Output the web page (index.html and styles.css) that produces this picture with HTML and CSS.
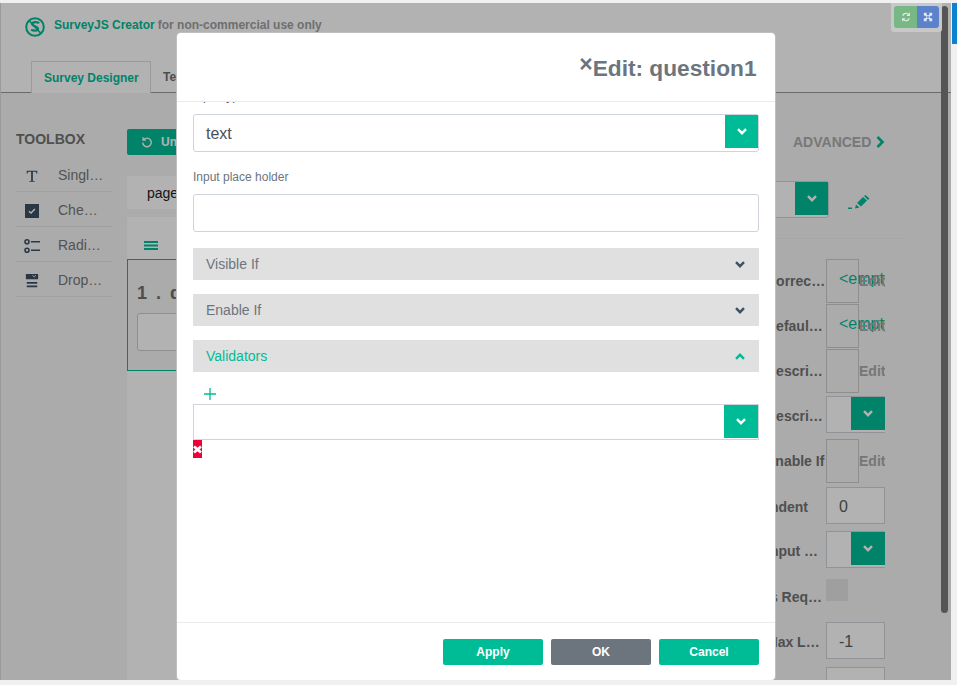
FILE: index.html
```html
<!DOCTYPE html>
<html lang="en">
<head>
    <meta charset="UTF-8">
    <meta name="viewport" content="width=device-width, initial-scale=1.0">
    <title>SurveyJS Creator</title>
    <link rel="stylesheet" href="styles.css">
</head>
<body>
    <div class="top-strip"></div>
    <div class="window">
        <div class="frame">
            <!-- Page behind the dialog -->
            <div class="app">
                <header class="brand">
                    <svg class="brand-logo" viewBox="0 0 20 20" fill="none" stroke="#00bc96">
                        <circle cx="10" cy="10" r="8.800" stroke-width="2"/>
                        <path d="M14 6.400c-1-1.800-6.600-1.800-6.800.6-.2 2.400 6 2 5.800 5-.2 2.200-5.200 2-6.800.6" stroke-width="2.200"/>
                        <path d="M4.500 4l11 12" stroke-width="1.800"/>
                    </svg>
                    <span class="brand-name">SurveyJS Creator</span>
                    <span class="brand-note">for non-commercial use only</span>
                </header>
                <nav class="tabs">
                    <a class="tab tab-active">Survey Designer</a>
                    <a class="tab">Test Survey</a>
                </nav>
                <main class="workspace">
                    <aside class="toolbox">
                        <h4 class="toolbox-title">TOOLBOX</h4>
                        <div class="tool">
                            <svg class="tool-icon" viewBox="0 0 16 16"><path d="M2 2h12v3.500h-.8C13 3.500 12.500 3 11 3H9v10c0 .5.500.8 2 .8v.7H5v-.7c1.500 0 2-.3 2-.8V3H5C3.500 3 3 3.500 2.800 5.500H2z"/></svg>
                            <span class="tool-name">Single Input</span>
                        </div>
                        <div class="tool">
                            <svg class="tool-icon" viewBox="0 0 16 16"><path d="M0 0h16v16H0z"/><path d="M4.500 8.200l2.400 2.200 4.400-4.600" fill="none" stroke="#fff" stroke-width="1.600"/></svg>
                            <span class="tool-name">Checkbox</span>
                        </div>
                        <div class="tool">
                            <svg class="tool-icon tool-icon-wide" viewBox="0 0 16 14"><circle cx="3" cy="2.800" r="2" fill="none" stroke="#3d5165" stroke-width="1.600"/><circle cx="3" cy="11.200" r="2" fill="none" stroke="#3d5165" stroke-width="1.600"/><path d="M7 2h9v1.600H7zM7 10.400h9V12H7z"/></svg>
                            <span class="tool-name">Radiogroup</span>
                        </div>
                        <div class="tool">
                            <svg class="tool-icon" viewBox="0 1 16 16"><path d="M1 1h14v6H1z"/><path d="M2 10h12v2H2zM2 14h12v2H2z"/><path d="M8.500 2.500l2 1.800 2-1.800" fill="none" stroke="#fff"/></svg>
                            <span class="tool-name">Dropdown</span>
                        </div>
                    </aside>

                    <section class="designer">
                        <div class="toolbar">
                            <button class="undo-btn">
                                <svg viewBox="0 0 14 14" fill="none" stroke="#fff" stroke-width="1.600"><path d="M3.200 4.200A5 5 0 1 1 2 7.500"/><path d="M2.400 1.400v3.200h3.200"/></svg>
                                Undo
                            </button>
                        </div>
                        <div class="page-bar">page1</div>
                        <div class="surface">
                            <svg class="hamburger" viewBox="0 0 14 9" fill="#00bc96"><path d="M0 0h14v2H0zM0 3.500h14v2H0zM0 7h14v2H0z"/></svg>
                            <div class="question">
                                <div class="question-title">1 . question1</div>
                                <div class="question-input"></div>
                            </div>
                        </div>
                    </section>

                    <aside class="props">
                        <div class="props-head">ADVANCED
                            <svg viewBox="0 0 9 12" fill="none" stroke="#00bc96" stroke-width="2.600"><path d="M1.500 1l5 5-5 5"/></svg>
                        </div>
                        <div class="props-tools">
                            <div class="select select-props">
                                <span class="select-btn"><svg class="chev" viewBox="0 0 10 7"><path d="M1 1.200l4 4 4-4"/></svg></span>
                            </div>
                            <svg class="pencil" viewBox="0 0 22 15" fill="#00bc96"><path d="M0 12.500h4v1.500H0zM7 13.500l1-4 3.500 3zM9 8l6-6 4 3.500-6 6zM16 1l1.500-1 4 3.500L20 5z"/></svg>
                        </div>
                        <div class="prop-list">
                            <div class="prop-label">Correct Answer</div>
                            <div class="prop-value"><div class="edit-box"><span class="empty">&lt;empty&gt;</span></div><span class="edit-link">Edit</span></div>
                            <div class="prop-label">Default Value</div>
                            <div class="prop-value"><div class="edit-box"><span class="empty">&lt;empty&gt;</span></div><span class="edit-link">Edit</span></div>
                            <div class="prop-label">Description</div>
                            <div class="prop-value"><div class="edit-box"></div><span class="edit-link">Edit</span></div>
                            <div class="prop-label prop-label-tight">Description Location</div>
                            <div class="prop-value"><div class="select select-small"><span class="select-btn"><svg class="chev" viewBox="0 0 10 7"><path d="M1 1.200l4 4 4-4"/></svg></span></div></div>
                            <div class="prop-label">Enable If</div>
                            <div class="prop-value"><div class="edit-box"></div><span class="edit-link">Edit</span></div>
                            <div class="prop-label prop-label-tight">Indent</div>
                            <div class="prop-value"><div class="num-box">0</div></div>
                            <div class="prop-label prop-label-tight">Input Type</div>
                            <div class="prop-value"><div class="select select-small"><span class="select-btn"><svg class="chev" viewBox="0 0 10 7"><path d="M1 1.200l4 4 4-4"/></svg></span></div></div>
                            <div class="prop-label prop-label-check">Is Required</div>
                            <div class="prop-value"><div class="check-box"></div></div>
                            <div class="prop-label prop-label-tight">Max Length</div>
                            <div class="prop-value"><div class="num-box">-1</div></div>
                            <div class="prop-label prop-label-tight">Min Width</div>
                            <div class="prop-value"><div class="num-box"></div></div>
                        </div>
                    </aside>
                </main>
            </div>

            <div class="backdrop"></div>

            <!-- Edit dialog -->
            <div class="modal">
                <div class="modal-header">
                    <span class="modal-close">×</span>
                    <h5 class="modal-title">Edit: question1</h5>
                </div>
                <div class="modal-body">
                    <label class="field-label field-label-scrolled">Input type</label>
                    <div class="select select-large">
                        <span class="select-text">text</span>
                        <span class="select-btn"><svg class="chev" viewBox="0 0 10 7"><path d="M1 1.200l4 4 4-4"/></svg></span>
                    </div>
                    <label class="field-label">Input place holder</label>
                    <div class="text-input"></div>
                    <div class="section-bar">Visible If <svg class="chev chev-dark" viewBox="0 0 10 7"><path d="M1 1.200l4 4 4-4"/></svg></div>
                    <div class="section-bar">Enable If <svg class="chev chev-dark" viewBox="0 0 10 7"><path d="M1 1.200l4 4 4-4"/></svg></div>
                    <div class="section-bar section-open">Validators <svg class="chev chev-teal" viewBox="0 0 10 7"><path d="M1 5.800l4-4 4 4"/></svg></div>
                    <svg class="add-icon" viewBox="0 0 12 12" stroke="#00bc96" stroke-width="1.300"><path d="M6 0v12M0 6h12"/></svg>
                    <div class="select select-validator">
                        <span class="select-btn"><svg class="chev" viewBox="0 0 10 7"><path d="M1 1.200l4 4 4-4"/></svg></span>
                    </div>
                    <button class="remove-btn">
                        <svg viewBox="0 0 9 9" stroke="#fff" stroke-width="2.800"><path d="M1 1.500l7 6M8 1.500l-7 6"/></svg>
                    </button>
                </div>
                <div class="modal-footer">
                    <button class="btn btn-teal">Apply</button>
                    <button class="btn btn-gray">OK</button>
                    <button class="btn btn-teal">Cancel</button>
                </div>
            </div>

            <div class="scrollbar"></div>

            <!-- Floating buttons -->
            <div class="float-box">
                <span class="float-btn float-green">
                    <svg viewBox="0 0 12 12" fill="none" stroke="#e4efe6" stroke-width="1.300"><path d="M2 4.500A4.200 4.200 0 0 1 9.500 3.500M10 7.500A4.200 4.200 0 0 1 2.500 8.500"/><path d="M10 1v3H7M2 11V8h3"/></svg>
                </span>
                <span class="float-btn float-blue">
                    <svg viewBox="0 0 12 12" fill="#e4e9f5"><path d="M1 1h4L3.800 2.200 6 4.400 4.400 6 2.200 3.800 1 5zM11 1v4L9.800 3.800 7.600 6 6 4.400 8.200 2.200 7 1zM1 11V7l1.200 1.200L4.400 6 6 7.600 3.800 9.800 5 11zM11 11H7l1.200-1.200L6 7.600 7.600 6l2.200 2.200L11 7z"/></svg>
                </span>
            </div>
            <div class="edge-notch"></div>
        </div>
        <div class="side-rail"><div class="side-blue"></div></div>
    </div>
    <div class="bottom-strip"></div>
</body>
</html>
```

FILE: styles.css
```css
/* Global styles */
* {
    box-sizing: border-box;
}

html, body {
    height: 100%;
}

body {
    font-family: "Liberation Sans", Arial, sans-serif;
    margin: 0;
    display: flex;
    flex-direction: column;
    width: 957px;
    height: 685px;
    overflow: hidden;
    background-color: #f0f0f0;
}

button {
    font-family: inherit;
    border: none;
    padding: 0;
}

.top-strip {
    height: 3px;
}

.bottom-strip {
    height: 5px;
}

.window {
    display: flex;
    height: 677px;
}

.frame {
    position: relative;
    width: 951px;
    border-left: 1px solid #9a9a9a;
    overflow: hidden;
}

.side-rail {
    width: 6px;
    padding-left: 1px;
}

.side-blue {
    height: 41px;
    background-color: #0a82cf;
}

/* App behind the dialog */
.app {
    height: 100%;
    display: flex;
    flex-direction: column;
    background-color: #fff;
}

.brand {
    display: flex;
    align-items: center;
    height: 58px;
    padding: 0 0 11px 24px;
    font-size: 12px;
    font-weight: bold;
}

.brand-logo {
    width: 20px;
    height: 20px;
    margin-right: 9px;
}

.brand-name {
    color: #00bc96;
    margin: 0 3px 3px 0;
}

.brand-note {
    color: #a0a0a0;
    margin-bottom: 3px;
}

.tabs {
    display: flex;
    height: 32px;
    padding-left: 30px;
    border-bottom: 1px solid #999;
    font-size: 12px;
    font-weight: bold;
    white-space: nowrap;
}

.tab {
    padding: 9px 12px;
    height: 32px;
    color: #6f6f6f;
}

.tab-active {
    width: 120px;
    color: #00bc96;
    background-color: #fff;
    border: 1px solid #ddd;
    border-bottom: none;
}

.workspace {
    flex: 1;
    display: flex;
    min-height: 0;
    background-color: #f5f5f5;
}

.toolbox {
    width: 126px;
    padding-left: 15px;
}

.toolbox-title {
    margin: 37px 0 9px;
    font-size: 14px;
    line-height: 18px;
    color: #727272;
}

.tool {
    display: flex;
    align-items: flex-start;
    width: 96px;
    height: 35px;
    padding: 9px 0 0 9px;
    border-bottom: 1px solid #e6e6e6;
}

.tool-icon {
    flex: none;
    width: 14px;
    height: 14px;
    margin: 3px 19px 0 0;
    fill: #3d5165;
}

.tool-icon-wide {
    width: 16px;
    margin: 3px 18px 0 -1px;
}

.tool-name {
    font-size: 14px;
    line-height: 18px;
    color: #777;
    width: 46px;
    overflow: hidden;
    white-space: nowrap;
    text-overflow: ellipsis;
}

.designer {
    width: 633px;
    display: flex;
    flex-direction: column;
}

.toolbar {
    height: 83px;
    padding-top: 36px;
}

.undo-btn {
    display: flex;
    align-items: center;
    gap: 8px;
    width: 90px;
    height: 26px;
    padding-left: 14px;
    border-radius: 2px;
    font-size: 12px;
    font-weight: bold;
    color: #fff;
    background-color: #00bc96;
}

.undo-btn svg {
    width: 12px;
    height: 12px;
}

.page-bar {
    height: 33px;
    padding: 9px 20px;
    font-size: 14px;
    line-height: 16px;
    color: #222;
    background-color: #fff;
    margin-bottom: 8px;
}

.surface {
    flex: 1;
    padding-top: 24px;
    background-color: #fff;
}

.hamburger {
    display: block;
    width: 14px;
    height: 9px;
    margin: 0 0 9px 17px;
}

.question {
    height: 112px;
    padding: 22px 9px 0;
    border: 1px solid #00bc96;
    background-color: #f5f5f5;
}

.question-title {
    font-size: 18px;
    font-weight: bold;
    line-height: 22px;
    letter-spacing: 2px;
    color: #6f6f6f;
    margin-bottom: 9px;
}

.question-input {
    height: 38px;
    background-color: #fff;
    border: 1px solid #ccc;
    border-radius: 3px;
}

/* Property grid */
.props {
    width: 144px;
    margin-right: 47px;
    padding-left: 6px;
}

.props-head {
    display: flex;
    align-items: center;
    gap: 5px;
    height: 18px;
    margin-top: 40px;
    padding-left: 27px;
    font-size: 14px;
    font-weight: bold;
    color: #acacac;
}

.props-head svg {
    width: 9px;
    height: 12px;
}

.props-tools {
    display: flex;
    height: 88px;
    padding-top: 30px;
    margin: 0 0 20px -6px;
    border-bottom: 1px solid #eee;
}

.select-props {
    width: 69px;
    height: 37px;
}

.pencil {
    width: 22px;
    height: 15px;
    margin: 14px 0 0 19px;
}

.prop-list {
    display: grid;
    grid-template-columns: 60px 59px;
    grid-template-rows: 45px 45px 47px 43px 48px 44px 48px 43px 45px 45px;
}

.prop-label {
    padding: 14px 0.500px 0 0;
    font-size: 14px;
    line-height: 16px;
    font-weight: bold;
    color: #727272;
    overflow: hidden;
    white-space: nowrap;
    text-overflow: ellipsis;
}

.prop-label-tight {
    padding-top: 12px;
}

.prop-label-check {
    padding-top: 10px;
}

.prop-value {
    display: flex;
    align-items: flex-start;
    overflow: hidden;
}

.edit-box {
    flex: none;
    width: 33px;
    height: 44px;
    padding: 10px 0 0 12px;
    border: 1px solid #ccc;
}

.empty {
    font-size: 16px;
    line-height: 18px;
    color: #00bc96;
    white-space: nowrap;
}

.edit-link {
    margin-top: 13px;
    font-size: 14px;
    line-height: 18px;
    font-weight: bold;
    color: #aaa;
}

.num-box {
    flex: none;
    width: 59px;
    height: 37px;
    padding: 9px 0 0 12px;
    font-size: 16px;
    line-height: 19px;
    color: #5c5c5c;
    background-color: #fff;
    border: 1px solid #ced4da;
}

.check-box {
    width: 22px;
    height: 22px;
    background-color: #e4e4e4;
}

/* Selects */
.select {
    position: relative;
    display: flex;
    justify-content: flex-end;
    align-items: flex-start;
    background-color: #fff;
    border: 1px solid #ced4da;
    border-radius: 3px;
}

.select-btn {
    display: flex;
    align-items: center;
    justify-content: center;
    width: 33px;
    height: 33px;
    background-color: #00bc96;
}

.chev {
    width: 10px;
    height: 7px;
    fill: none;
    stroke: #fff;
    stroke-width: 2.400;
}

.chev-dark {
    stroke: #3d5165;
}

.chev-teal {
    stroke: #00bc96;
}

.select-small {
    flex: none;
    width: 60px;
    height: 37px;
    border-radius: 0;
}

.select-small .select-btn {
    width: 34px;
    flex: none;
}

/* Dialog */
.backdrop {
    position: absolute;
    inset: 0;
    background-color: rgba(0, 0, 0, 0.3);
}

.modal {
    position: absolute;
    left: 175px;
    top: 29px;
    width: 600px;
    height: 649px;
    display: flex;
    flex-direction: column;
    background-color: #fff;
    border: 1px solid rgba(0, 0, 0, 0.25);
    border-radius: 5px;
}

.modal-header {
    display: flex;
    justify-content: flex-end;
    align-items: flex-start;
    height: 69px;
    padding: 20px 18.500px 0 0;
    border-bottom: 1px solid #e9ecef;
}

.modal-close {
    font-size: 23px;
    font-weight: bold;
    line-height: 24px;
    margin-top: -1px;
    color: #6c757d;
}

.modal-title {
    margin: 0;
    font-size: 22.700px;
    line-height: 30px;
    color: #6c757d;
}

.modal-body {
    flex: 1;
    min-height: 0;
    padding: 0 16px;
    overflow: hidden;
}

.field-label {
    display: block;
    font-size: 12px;
    line-height: 18px;
    color: #6c757d;
    margin: 0 0 8px;
}

.field-label-scrolled {
    margin: -15px 0 9px;
    color: #495057;
}

.select-large {
    height: 38px;
    margin-bottom: 16px;
    justify-content: space-between;
}

.select-text {
    padding: 9px 0 0 12px;
    font-size: 16px;
    line-height: 20px;
    color: #495057;
}

.text-input {
    height: 38px;
    margin-bottom: 16px;
    border: 1px solid #ced4da;
    border-radius: 3px;
}

.section-bar {
    display: flex;
    justify-content: space-between;
    align-items: center;
    height: 32px;
    margin-bottom: 14px;
    padding: 0 14px 0 13px;
    font-size: 14px;
    color: #6c757d;
    background-color: #e0e0e0;
}

.section-open {
    color: #00bc96;
    margin-bottom: 16px;
}

.add-icon {
    display: block;
    width: 12px;
    height: 12px;
    margin: 0 0 4px 11px;
}

.select-validator {
    height: 36px;
    border-radius: 0;
}

.select-validator .select-btn {
    width: 34px;
}

.remove-btn {
    display: block;
    width: 9px;
    height: 18px;
    background-color: #ee0038;
}

.remove-btn svg {
    display: block;
    width: 9px;
    height: 9px;
}

.modal-footer {
    display: flex;
    justify-content: flex-end;
    gap: 8px;
    height: 58px;
    padding: 16px 16px 0 0;
    border-top: 1px solid #e9ecef;
}

.btn {
    width: 100px;
    height: 26px;
    border-radius: 2px;
    font-size: 12px;
    font-weight: bold;
    color: #fff;
}

.btn-teal {
    background-color: #00bc96;
}

.btn-gray {
    background-color: #6c757d;
}

/* Things over the dialog */
.scrollbar {
    position: absolute;
    left: 940px;
    top: 3px;
    width: 7px;
    height: 607px;
    border-radius: 4px;
    background-color: #555;
}

.float-box {
    position: absolute;
    left: 890px;
    top: 0;
    display: flex;
    width: 51px;
    height: 29px;
    padding: 3px 3px 0;
    background-color: #c8c8c8;
    border-radius: 0 0 3px 3px;
}

.float-btn {
    display: flex;
    align-items: center;
    justify-content: center;
    height: 22px;
}

.float-btn svg {
    width: 10px;
    height: 10px;
}

.float-green {
    width: 23px;
    background-color: #78b884;
    border-radius: 3px 0 0 3px;
}

.float-blue {
    width: 22px;
    background-color: #5b82cb;
    border-radius: 0 3px 3px 0;
}

.edge-notch {
    position: absolute;
    left: -1px;
    top: 322px;
    width: 1px;
    height: 50px;
    background-color: #e8e8e8;
}
```
